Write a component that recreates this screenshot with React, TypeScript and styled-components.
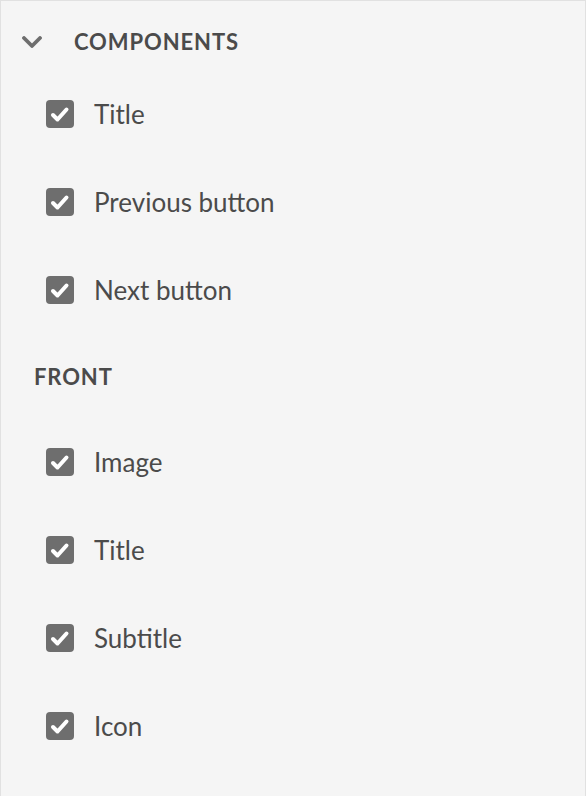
import React from "react";
import styled, { createGlobalStyle } from "styled-components";

const GlobalStyle = createGlobalStyle`
  html, body {
    margin: 0;
    padding: 0;
    background: #f4f4f4;
  }
`;

const Panel = styled.div`
  box-sizing: border-box;
  width: 586px;
  height: 796px;
  background: #f5f5f5;
  border-top: 1px solid #e1e1e1;
  border-left: 1px solid #e1e1e1;
  border-right: 1px solid #e1e1e1;
  font-family: "Lato", "Open Sans", sans-serif;
  color: #4b4b4b;
`;

const SectionHeader = styled.button`
  display: flex;
  align-items: center;
  box-sizing: border-box;
  width: 100%;
  height: 69px;
  padding: 12px 0 0 21px;
  background: none;
  border: none;
  cursor: pointer;
  font-family: inherit;
`;

const Chevron = styled.svg`
  width: 20px;
  height: 12px;
  margin-right: 32px;
`;

const HeaderText = styled.span`
  font-size: 22px;
  font-weight: 700;
  letter-spacing: 0.9px;
  color: #4b4b4b;
`;

const GroupLabel = styled.div`
  display: flex;
  align-items: center;
  height: 84px;
  padding-left: 33px;
  font-size: 22px;
  font-weight: 700;
  letter-spacing: 0.9px;
`;

const Item = styled.label`
  display: flex;
  align-items: center;
  height: 88px;
  padding-left: 45px;
  gap: 20px;
  cursor: pointer;
`;

const Box = styled.span`
  display: flex;
  align-items: center;
  justify-content: center;
  width: 28px;
  height: 28px;
  border-radius: 4px;
  background: #6e6e6e;
`;

const Label = styled.span`
  font-size: 26px;
  color: #4b4b4b;
`;

function Check(prop: { label: string }) {
  return (
    <Item>
      <Box>
        <svg width="28" height="28" viewBox="0 0 28 28">
          <path
            d="M7 15 L11.5 19.5 L20.5 9.5"
            fill="none"
            stroke="#fff"
            strokeWidth="4"
            strokeLinecap="round"
            strokeLinejoin="round"
          />
        </svg>
      </Box>
      <Label>{prop.label}</Label>
    </Item>
  );
}

export default function App() {
  return (
    <>
      <GlobalStyle />
      <Panel>
        <SectionHeader>
          <Chevron viewBox="0 0 20 12">
            <path
              d="M2 2 L10 10 L18 2"
              fill="none"
              stroke="#6e6e6e"
              strokeWidth="3.8"
              strokeLinecap="round"
              strokeLinejoin="round"
            />
          </Chevron>
          <HeaderText>COMPONENTS</HeaderText>
        </SectionHeader>
        <Check label="Title" />
        <Check label="Previous button" />
        <Check label="Next button" />
        <GroupLabel>FRONT</GroupLabel>
        <Check label="Image" />
        <Check label="Title" />
        <Check label="Subtitle" />
        <Check label="Icon" />
      </Panel>
    </>
  );
}
